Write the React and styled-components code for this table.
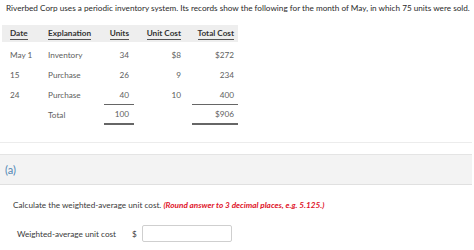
import React from "react";
import styled, { createGlobalStyle } from "styled-components";

const GlobalStyle = createGlobalStyle`
  body {
    margin: 0;
    background: #fff;
    font-family: Lato, "Open Sans", Arial, sans-serif;
    color: #333;
  }
`;

const Page = styled.div`
  width: 474px;
  height: 250px;
  overflow: hidden;
`;

const Intro = styled.p`
  margin: 0;
  padding: 3px 0 0 6px;
  font-size: 8.2px;
  line-height: 11px;
  white-space: nowrap;
  color: #2a2a2a;
`;

const Table = styled.div`
  margin: 11px 0 0 2px;
  width: 236px;
`;

const Row = styled.div`
  display: grid;
  grid-template-columns: 42px 60px 30px 58px 46px;
  height: ${(p) => (p.head ? "17px" : "20px")};
  margin-bottom: ${(p) => (p.head ? "3px" : "0")};
  background: ${(p) => (p.head ? "#eeeeee" : "transparent")};
  font-size: 8.2px;
`;

const Cell = styled.div`
  display: flex;
  align-items: ${(p) => (p.head ? "flex-end" : "center")};
  justify-content: ${(p) => (p.right ? "flex-end" : "flex-start")};
  padding: ${(p) => (p.head ? "0 0 2px 0" : "0")};
  padding-left: ${(p) => p.pl || 0}px;
  padding-right: ${(p) => p.pr || 0}px;
  color: ${(p) => (p.head ? "#333" : "#5e5e5e")};
  font-weight: ${(p) => (p.head ? 700 : 400)};
  border-bottom: ${(p) =>
    p.rule === "single" ? "1px solid #666" : p.rule === "double" ? "2px solid #666" : "none"};
`;

const HeadLabel = styled.span`
  border-bottom: 1px solid #555;
  line-height: 10px;
  padding-bottom: 1px;
`;

const Divider = styled.div`
  margin-top: 17px;
  width: 472px;
  height: 1px;
  background: #ececec;
`;

const PartBar = styled.div`
  margin-top: 11px;
  width: 472px;
  height: 31px;
  display: flex;
  align-items: center;
  padding-left: 5px;
  box-sizing: border-box;
  background: #f3f3f3;
  border-top: 1px solid #e4e4e4;
  border-bottom: 1px solid #e0e0e0;
  color: #4f86b3;
  font-size: 11px;
`;

const Prompt = styled.p`
  margin: 15px 0 0 13px;
  font-size: 8.2px;
  line-height: 11px;
  color: #3a3a3a;
`;

const Hint = styled.em`
  color: #e0142a;
  font-weight: 700;
`;

const AnswerRow = styled.div`
  display: flex;
  align-items: center;
  margin: 14px 0 0 17px;
  font-size: 8.2px;
  color: #3a3a3a;
`;

const AnswerLabel = styled.span`
  width: 115px;
`;

const Currency = styled.span`
  width: 10px;
`;

const AnswerInput = styled.div`
  width: 90px;
  height: 17px;
  box-sizing: border-box;
  border: 1px solid #cfcfcf;
  border-radius: 2px;
  background: #fff;
`;

const rows = [
  ["May 1", "Inventory", "34", "$8", "$272"],
  ["15", "Purchase", "26", "9", "234"],
  ["24", "Purchase", "40", "10", "400"],
  ["", "Total", "100", "", "$906"],
];

export default function App() {
  return (
    <Page>
      <GlobalStyle />
      <Intro>
        Riverbed Corp uses a periodic inventory system. Its records show the following for the
        month of May, in which 75 units were sold.
      </Intro>
      <Table>
        <Row head>
          <Cell head pl={8}>
            <HeadLabel>Date</HeadLabel>
          </Cell>
          <Cell head pl={4}>
            <HeadLabel>Explanation</HeadLabel>
          </Cell>
          <Cell head right pr={5}>
            <HeadLabel>Units</HeadLabel>
          </Cell>
          <Cell head right pr={11}>
            <HeadLabel>Unit Cost</HeadLabel>
          </Cell>
          <Cell head right pr={4}>
            <HeadLabel>Total Cost</HeadLabel>
          </Cell>
        </Row>
        {rows.map((r, i) => {
          const rule = i === 2 ? "single" : i === 3 ? "double" : null;
          return (
            <Row key={i}>
              <Cell pl={8}>{r[0]}</Cell>
              <Cell pl={4}>{r[1]}</Cell>
              <Cell right pr={5} rule={rule}>
                {r[2]}
              </Cell>
              <Cell right pr={11}>{r[3]}</Cell>
              <Cell right pr={4} rule={rule}>
                {r[4]}
              </Cell>
            </Row>
          );
        })}
      </Table>
      <Divider />
      <PartBar>(a)</PartBar>
      <Prompt>
        Calculate the weighted-average unit cost.{" "}
        <Hint>(Round answer to 3 decimal places, e.g. 5.125.)</Hint>
      </Prompt>
      <AnswerRow>
        <AnswerLabel>Weighted-average unit cost</AnswerLabel>
        <Currency>$</Currency>
        <AnswerInput />
      </AnswerRow>
    </Page>
  );
}
